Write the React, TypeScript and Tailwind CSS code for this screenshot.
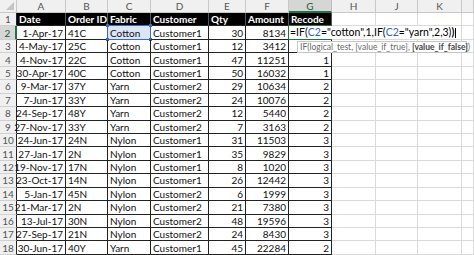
import React from "react";

// Excel-ish sheet: fabric recode with a nested IF being typed into G2.

const COLS = ["A", "B", "C", "D", "E", "F", "G", "H", "J", "K", ""];

const HEAD = ["Date", "Order ID", "Fabric", "Customer", "Qty", "Amount", "Recode"];

// G3 sits under the function tooltip, so it is left blank here
const ROWS: (string | number)[][] = [
  ["1-Apr-17", "41C", "Cotton", "Customer1", 30, 8134, ""],
  ["4-May-17", "25C", "Cotton", "Customer1", 12, 3412, ""],
  ["4-Nov-17", "22C", "Cotton", "Customer1", 47, 11251, 1],
  ["30-Apr-17", "40C", "Cotton", "Customer1", 50, 16032, 1],
  ["9-Mar-17", "37Y", "Yarn", "Customer2", 29, 10634, 2],
  ["7-Jun-17", "33Y", "Yarn", "Customer2", 24, 10076, 2],
  ["24-Sep-17", "48Y", "Yarn", "Customer2", 12, 5440, 2],
  ["27-Nov-17", "33Y", "Yarn", "Customer2", 7, 3163, 2],
  ["24-Jun-17", "24N", "Nylon", "Customer1", 31, 11503, 3],
  ["27-Jan-17", "2N", "Nylon", "Customer1", 35, 9829, 3],
  ["19-Nov-17", "17N", "Nylon", "Customer1", 8, 1020, 3],
  ["23-Oct-17", "14N", "Nylon", "Customer1", 26, 12442, 3],
  ["5-Jan-17", "45N", "Nylon", "Customer2", 6, 1999, 3],
  ["21-Mar-17", "2N", "Nylon", "Customer2", 21, 7380, 3],
  ["13-Jul-17", "30N", "Nylon", "Customer2", 48, 19596, 3],
  ["27-Sep-17", "21N", "Nylon", "Customer2", 24, 8430, 3],
  ["30-Jun-17", "40Y", "Yarn", "Customer1", 45, 22284, 2],
];

const GRID = "grid grid-cols-[17px_49px_42px_43px_58px_37px_43px_43px_44px_42px_44px_1fr]";

function Corner() {
  return (
    <div className="h-[13px] bg-[#f0f0f0] border-r border-b border-[#c8c8c8] flex items-end justify-end p-[2px]">
      <svg width="8" height="8" viewBox="0 0 8 8">
        <path d="M8 0 L8 8 L0 8 Z" fill="#c4c4c4" />
      </svg>
    </div>
  );
}

function Formula() {
  return (
    <div className="absolute left-[1px] top-0 h-full w-max flex items-center bg-white pr-[1px] z-10 text-[10.5px] text-black">
      <span>=IF(</span>
      <span className="text-[#2f5fd0]">C2</span>
      <span>="cotton",1,IF(</span>
      <span className="text-[#2f5fd0]">C2</span>
      <span>="yarn",2,3)</span>
      <span className="font-bold">)</span>
      <span className="w-px h-[10px] bg-black ml-[1px]" />
    </div>
  );
}

function Handle({ pos }: { pos: string }) {
  return <span className={`absolute w-[3px] h-[3px] bg-[#3a68c8] ${pos}`} />;
}

export default function App() {
  return (
    <div className="w-[474px] h-[255px] overflow-hidden bg-white relative font-['Lato','Liberation_Sans',sans-serif] leading-none whitespace-nowrap">
      {/* column letters */}
      <div className={GRID}>
        <Corner />
        {COLS.map((c, i) => (
          <div
            key={i}
            className={`h-[13px] flex items-center justify-center text-[10px] border-r ${
              c === "G"
                ? "bg-[#d6d6d6] text-[#1d5c36] border-b-2 border-b-[#217346] border-r-[#bdbdbd]"
                : "bg-[#f0f0f0] text-[#555] border-b border-[#c8c8c8]"
            }`}
          >
            {c}
          </div>
        ))}
      </div>

      {/* header row */}
      <div className={GRID}>
        <div className="h-[13.44px] bg-[#f0f0f0] border-r border-r-[#222] border-b border-b-[#d0d0d0] flex items-center justify-center text-[10px] text-[#555]">
          1
        </div>
        {HEAD.map((h) => (
          <div
            key={h}
            className="h-[13.44px] overflow-hidden bg-black text-white font-bold text-[10px] flex items-center pl-[2px] border-r border-r-[#555] border-b border-b-[#222]"
          >
            {h}
          </div>
        ))}
        {[0, 1, 2, 3].map((k) => (
          <div key={k} className="h-[13.44px] border-r border-b border-[#dadada]" />
        ))}
      </div>

      {/* data */}
      {ROWS.map((r, ri) => {
        const n = ri + 2;
        return (
          <div key={n} className={GRID}>
            <div
              className={`h-[13.44px] flex items-center justify-center text-[10px] border-b border-b-[#d0d0d0] ${
                n === 2
                  ? "bg-[#d6d6d6] text-[#1d5c36] border-r-2 border-r-[#217346]"
                  : "bg-[#f0f0f0] text-[#555] border-r border-r-[#222]"
              }`}
            >
              {n}
            </div>
            {r.map((v, ci) => {
              const num = typeof v === "number" || ci === 0;
              const isC2 = n === 2 && ci === 2;
              const isG2 = n === 2 && ci === 6;
              return (
                <div
                  key={ci}
                  className={`h-[13.44px] relative flex items-center text-[10px] text-[#111] border-r border-b border-[#222] px-[2px] ${
                    num ? "justify-end" : ""
                  } ${isC2 ? "bg-[#dbe5f6]" : ""}`}
                >
                  {isC2 && (
                    <>
                      <span className="absolute inset-[-1px] border border-[#3a68c8] pointer-events-none" />
                      <Handle pos="-left-[2px] -top-[2px]" />
                      <Handle pos="-right-[2px] -top-[2px]" />
                      <Handle pos="-left-[2px] -bottom-[2px]" />
                      <Handle pos="-right-[2px] -bottom-[2px]" />
                    </>
                  )}
                  {isG2 ? (
                    <>
                      <span className="absolute inset-[-1px] border border-[#217346]" />
                      <Formula />
                    </>
                  ) : (
                    v
                  )}
                </div>
              );
            })}
            {[0, 1, 2, 3].map((k) => (
              <div key={k} className="h-[13.44px] border-r border-b border-[#dadada]" />
            ))}
          </div>
        );
      })}

      {/* function tooltip */}
      <div className="absolute left-[297px] top-[41px] w-[170px] h-[12px] bg-white border border-[#c6c6c6] flex items-center pl-[2px] text-[8.5px] text-[#6a6a6a] z-20">
        <span>IF(logical_test, [value_if_true],&nbsp;</span>
        <span className="font-bold text-[#444]">[value_if_false]</span>
        <span>)</span>
      </div>
    </div>
  );
}
